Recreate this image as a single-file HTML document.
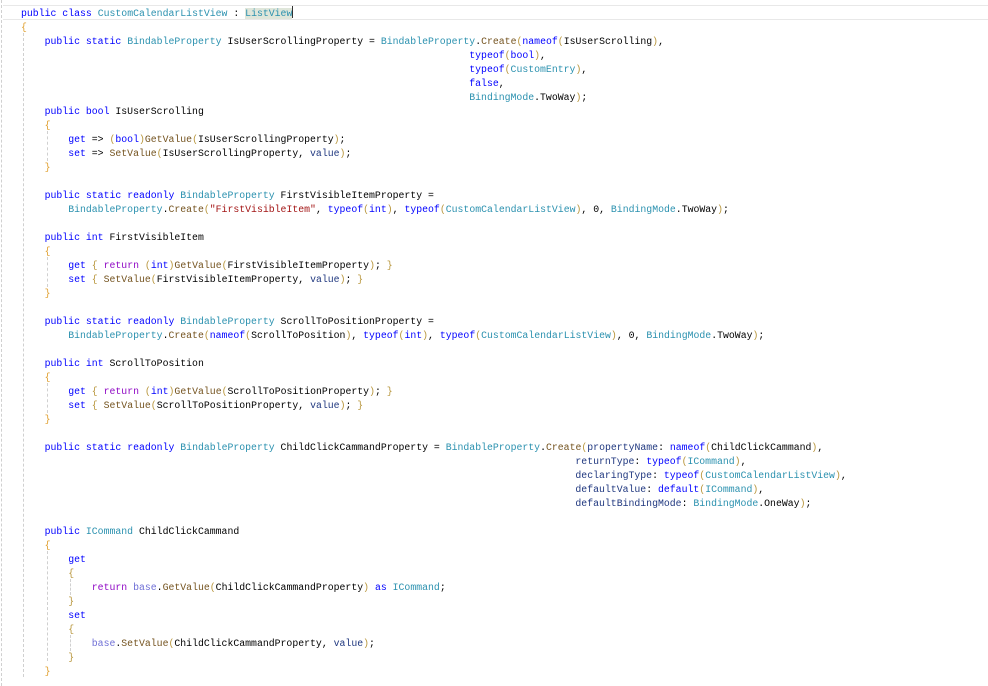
<!DOCTYPE html>
<html><head><meta charset="utf-8"><style>
html,body{margin:0;padding:0;background:#fff;width:988px;height:686px;overflow:hidden}
pre{position:absolute;left:21px;top:6px;margin:0;font-family:"Liberation Mono",monospace;font-size:9.83px;line-height:14px;color:#000;white-space:pre}
.k{color:#0000ff}.c{color:#8f08c4}.t{color:#2b91af}.m{color:#74531f}.p{color:#b9973e}.b{color:#e0a030}.s{color:#a31515}.v{color:#1f377f}.bs{color:#6f6fd6}
.g{position:absolute;width:0;border-left:1px dashed #d0d0d0}
.cur{position:absolute;left:3px;right:0;top:5px;height:13px;border-top:1px solid #e8e8e8;border-bottom:1px solid #e8e8e8}
.sel{background:#dfe6da}
.caret{display:inline-block;width:1px;height:12px;background:#333;vertical-align:-2px}
</style></head><body>
<div class="cur"></div>
<div class="g" style="left:1px;top:0;height:686px"></div>
<div class="g" style="left:23px;top:33px;height:644px"></div>
<div class="g" style="left:47px;top:131px;height:30px"></div>
<div class="g" style="left:47px;top:257px;height:30px"></div>
<div class="g" style="left:47px;top:383px;height:30px"></div>
<div class="g" style="left:47px;top:551px;height:110px"></div>
<div class="g" style="left:70px;top:579px;height:16px"></div>
<div class="g" style="left:70px;top:635px;height:16px"></div>
<pre><span class="k">public</span> <span class="k">class</span> <span class="t">CustomCalendarListView</span> : <span class="t sel">ListView</span><span class="caret"></span>
<span class="b">{</span>
    <span class="k">public</span> <span class="k">static</span> <span class="t">BindableProperty</span> IsUserScrollingProperty = <span class="t">BindableProperty</span>.<span class="m">Create</span><span class="p">(</span><span class="k">nameof</span><span class="p">(</span>IsUserScrolling<span class="p">)</span>,
                                                                            <span class="k">typeof</span><span class="p">(</span><span class="k">bool</span><span class="p">)</span>,
                                                                            <span class="k">typeof</span><span class="p">(</span><span class="t">CustomEntry</span><span class="p">)</span>,
                                                                            <span class="k">false</span>,
                                                                            <span class="t">BindingMode</span>.TwoWay<span class="p">)</span>;
    <span class="k">public</span> <span class="k">bool</span> IsUserScrolling
    <span class="b">{</span>
        <span class="k">get</span> =&gt; <span class="p">(</span><span class="k">bool</span><span class="p">)</span><span class="m">GetValue</span><span class="p">(</span>IsUserScrollingProperty<span class="p">)</span>;
        <span class="k">set</span> =&gt; <span class="m">SetValue</span><span class="p">(</span>IsUserScrollingProperty, <span class="v">value</span><span class="p">)</span>;
    <span class="b">}</span>

    <span class="k">public</span> <span class="k">static</span> <span class="k">readonly</span> <span class="t">BindableProperty</span> FirstVisibleItemProperty =
        <span class="t">BindableProperty</span>.<span class="m">Create</span><span class="p">(</span><span class="s">"FirstVisibleItem"</span>, <span class="k">typeof</span><span class="p">(</span><span class="k">int</span><span class="p">)</span>, <span class="k">typeof</span><span class="p">(</span><span class="t">CustomCalendarListView</span><span class="p">)</span>, 0, <span class="t">BindingMode</span>.TwoWay<span class="p">)</span>;

    <span class="k">public</span> <span class="k">int</span> FirstVisibleItem
    <span class="b">{</span>
        <span class="k">get</span> <span class="p">{</span> <span class="c">return</span> <span class="p">(</span><span class="k">int</span><span class="p">)</span><span class="m">GetValue</span><span class="p">(</span>FirstVisibleItemProperty<span class="p">)</span>; <span class="p">}</span>
        <span class="k">set</span> <span class="p">{</span> <span class="m">SetValue</span><span class="p">(</span>FirstVisibleItemProperty, <span class="v">value</span><span class="p">)</span>; <span class="p">}</span>
    <span class="b">}</span>

    <span class="k">public</span> <span class="k">static</span> <span class="k">readonly</span> <span class="t">BindableProperty</span> ScrollToPositionProperty =
        <span class="t">BindableProperty</span>.<span class="m">Create</span><span class="p">(</span><span class="k">nameof</span><span class="p">(</span>ScrollToPosition<span class="p">)</span>, <span class="k">typeof</span><span class="p">(</span><span class="k">int</span><span class="p">)</span>, <span class="k">typeof</span><span class="p">(</span><span class="t">CustomCalendarListView</span><span class="p">)</span>, 0, <span class="t">BindingMode</span>.TwoWay<span class="p">)</span>;

    <span class="k">public</span> <span class="k">int</span> ScrollToPosition
    <span class="b">{</span>
        <span class="k">get</span> <span class="p">{</span> <span class="c">return</span> <span class="p">(</span><span class="k">int</span><span class="p">)</span><span class="m">GetValue</span><span class="p">(</span>ScrollToPositionProperty<span class="p">)</span>; <span class="p">}</span>
        <span class="k">set</span> <span class="p">{</span> <span class="m">SetValue</span><span class="p">(</span>ScrollToPositionProperty, <span class="v">value</span><span class="p">)</span>; <span class="p">}</span>
    <span class="b">}</span>

    <span class="k">public</span> <span class="k">static</span> <span class="k">readonly</span> <span class="t">BindableProperty</span> ChildClickCammandProperty = <span class="t">BindableProperty</span>.<span class="m">Create</span><span class="p">(</span><span class="v">propertyName</span>: <span class="k">nameof</span><span class="p">(</span>ChildClickCammand<span class="p">)</span>,
                                                                                              <span class="v">returnType</span>: <span class="k">typeof</span><span class="p">(</span><span class="t">ICommand</span><span class="p">)</span>,
                                                                                              <span class="v">declaringType</span>: <span class="k">typeof</span><span class="p">(</span><span class="t">CustomCalendarListView</span><span class="p">)</span>,
                                                                                              <span class="v">defaultValue</span>: <span class="k">default</span><span class="p">(</span><span class="t">ICommand</span><span class="p">)</span>,
                                                                                              <span class="v">defaultBindingMode</span>: <span class="t">BindingMode</span>.OneWay<span class="p">)</span>;

    <span class="k">public</span> <span class="t">ICommand</span> ChildClickCammand
    <span class="b">{</span>
        <span class="k">get</span>
        <span class="p">{</span>
            <span class="c">return</span> <span class="bs">base</span>.<span class="m">GetValue</span><span class="p">(</span>ChildClickCammandProperty<span class="p">)</span> <span class="k">as</span> <span class="t">ICommand</span>;
        <span class="p">}</span>
        <span class="k">set</span>
        <span class="p">{</span>
            <span class="bs">base</span>.<span class="m">SetValue</span><span class="p">(</span>ChildClickCammandProperty, <span class="v">value</span><span class="p">)</span>;
        <span class="p">}</span>
    <span class="b">}</span></pre>
</body></html>
